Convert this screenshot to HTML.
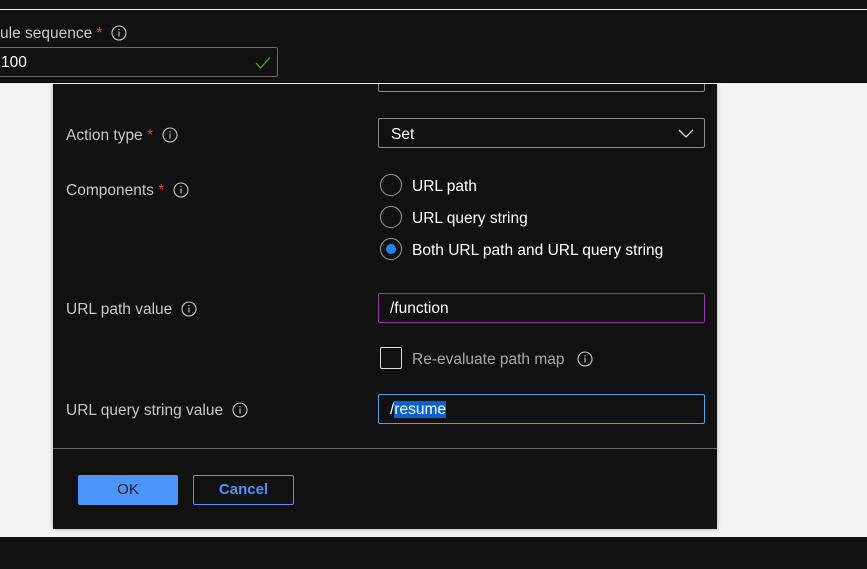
<!DOCTYPE html>
<html><head><meta charset="utf-8"><style>
*{margin:0;padding:0;box-sizing:border-box}
body{width:867px;height:569px;overflow:hidden;background:#f3f3f3;font-family:"Liberation Sans",sans-serif;font-size:14px;position:relative;color:#fff}
.a{position:absolute}
.lbl{color:#c8c8c8}
.req{color:#e53935}
.info{display:inline-block;width:16px;height:16px;vertical-align:-3px}
.inp{position:absolute;border:1px solid #8a8a8a;border-radius:2px;background:#111}
.radio{position:absolute;width:22px;height:22px;border:1px solid #9a9a9a;border-radius:50%}
.t{font-size:15.5px}
</style></head><body>
<svg width="0" height="0" style="position:absolute"><defs><symbol id="i" viewBox="0 0 16 16"><circle cx="8" cy="8" r="7" fill="none" stroke="#c8c8c8" stroke-width="1.1"/><rect x="7.45" y="6.5" width="1.1" height="5" fill="#c8c8c8"/><rect x="7.45" y="4" width="1.1" height="1.3" fill="#c8c8c8"/></symbol></defs></svg>
<div class="a" style="left:0;top:0;width:867px;height:9px;background:#111"></div>
<div class="a" style="left:0;top:9px;width:867px;height:1px;background:#e8e8e8"></div>
<div class="a" style="left:53px;top:84px;width:664px;height:445px;background:#111;box-shadow:0 0 4px rgba(0,0,0,.3)"></div>
<div class="a" style="left:0;top:537px;width:867px;height:32px;background:#111"></div>
<div class="inp" style="left:378px;top:70px;width:327px;height:22px;border-color:#8a8a8a"></div>
<div class="a" style="left:0;top:10px;width:867px;height:73px;background:#111"></div>
<div class="a" style="left:0;top:83px;width:867px;height:1px;background:#e8e8e8"></div>
<div class="a lbl t" style="left:0;top:25px">ule sequence <span class="req">*</span> &nbsp;<svg class="info"><use href="#i"/></svg></div>
<div class="inp" style="left:-5px;top:47px;width:283px;height:30px;border-color:#6a6a6a"><span class="a t" style="left:5px;top:6px">100</span>
<svg class="a" style="right:6px;top:8px" width="16" height="14" viewBox="0 0 16 14"><path d="M1 7l4.5 5L15 1.5" fill="none" stroke="#57a300" stroke-width="1.3"/></svg></div>

<div class="a lbl t" style="left:66px;top:127px">Action type <span class="req">*</span> &nbsp;<svg class="info"><use href="#i"/></svg></div>
<div class="inp" style="left:378px;top:118px;width:327px;height:30px"><span class="a t" style="left:12px;top:7px">Set</span>
<svg class="a" style="right:10px;top:10px" width="16" height="10" viewBox="0 0 16 10"><path d="M1 1l7 7 7-7" fill="none" stroke="#ddd" stroke-width="1.3"/></svg></div>

<div class="a lbl t" style="left:66px;top:182px">Components <span class="req">*</span> &nbsp;<svg class="info"><use href="#i"/></svg></div>
<div class="radio" style="left:380px;top:174px"></div><div class="a t" style="left:412px;top:178px">URL path</div>
<div class="radio" style="left:380px;top:206px"></div><div class="a t" style="left:412px;top:210px">URL query string</div>
<div class="radio" style="left:380px;top:238px"><div class="a" style="left:5px;top:5px;width:10px;height:10px;border-radius:50%;background:#1a86ff"></div></div><div class="a t" style="left:412px;top:242px">Both URL path and URL query string</div>

<div class="a lbl t" style="left:66px;top:301px">URL path value &nbsp;<svg class="info"><use href="#i"/></svg></div>
<div class="inp" style="left:378px;top:293px;width:327px;height:30px;border-color:#9b30b0"><span class="a t" style="left:11px;top:6px">/function</span></div>

<div class="a" style="left:380px;top:347px;width:22px;height:22px;border:1px solid #ddd;border-radius:2px"></div>
<div class="a t" style="left:412px;top:351px;color:#a8a8a8">Re-evaluate path map &nbsp;&nbsp;<svg class="info"><use href="#i"/></svg></div>

<div class="a lbl t" style="left:66px;top:402px">URL query string value &nbsp;<svg class="info"><use href="#i"/></svg></div>
<div class="inp" style="left:378px;top:394px;width:327px;height:30px;border-color:#4ea2ef"><span class="a t" style="left:11px;top:6px">/<span style="background:#0a62d0">resume</span></span></div>

<div class="a" style="left:53px;top:448px;width:664px;height:1px;background:#666"></div>
<div class="a" style="left:78px;top:475px;width:100px;height:30px;background:#4a95ff;border-radius:2px;color:#1b1b1b;text-align:center;line-height:30px;font-size:15px">OK</div>
<div class="a" style="left:193px;top:475px;width:101px;height:30px;border:1px solid #4a95ff;border-radius:2px;color:#4a95ff;text-align:center;line-height:28px;font-size:15px;font-weight:bold">Cancel</div>
</body></html>
